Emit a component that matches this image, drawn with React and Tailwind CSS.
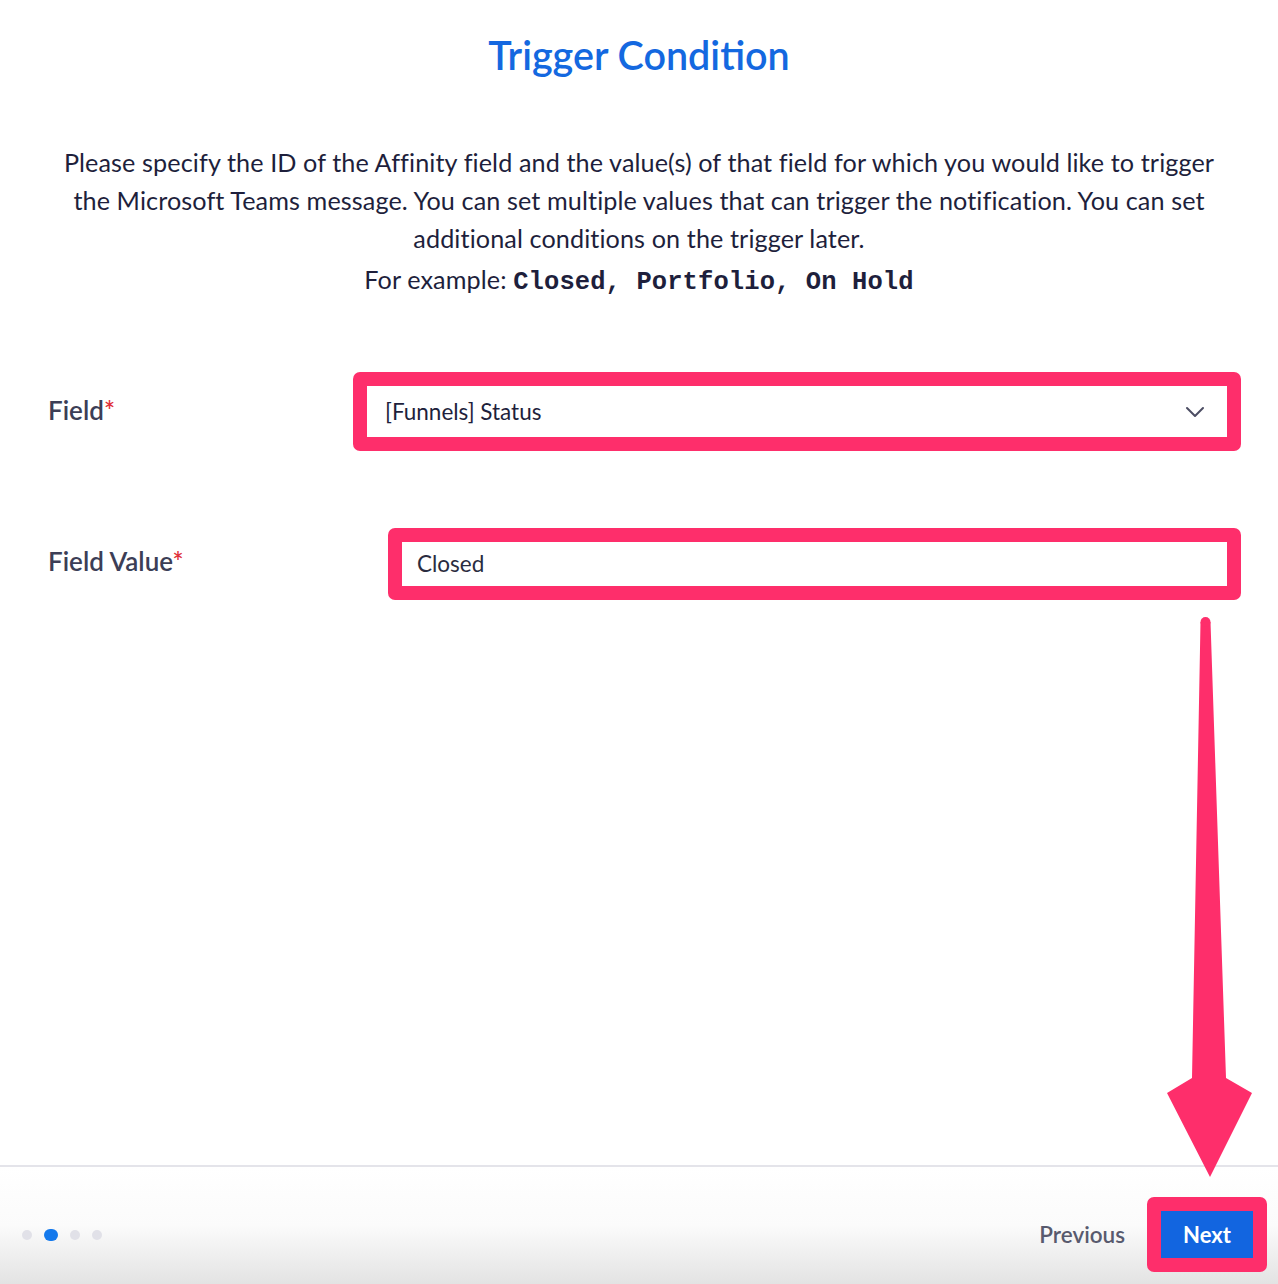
import React from "react";

const font = { fontFamily: '"Lato", "Noto Sans", sans-serif' };

export default function App() {
  return (
    <div className="relative flex h-[1284px] w-[1278px] flex-col overflow-hidden bg-white" style={font}>
      <main className="flex-1">
        <h1 className="pt-[31px] text-center text-[39.5px] font-semibold leading-[48px] text-[#1468e0]">
          Trigger Condition
        </h1>
        <div className="mt-[64px] px-[20px] text-center text-[25.2px] leading-[38px] tracking-[0.1px] text-[#1e1f3c]">
          <p>
            Please specify the ID of the Affinity field and the value(s) of that field for which you would like to trigger
            <br />
            the Microsoft Teams message. You can set multiple values that can trigger the notification. You can set
            <br />
            additional conditions on the trigger later.
          </p>
          <p className="mt-[3px]">
            For example:{" "}
            <span className="text-[25.5px] font-bold" style={{ fontFamily: '"Liberation Mono", monospace' }}>
              Closed, Portfolio, On Hold
            </span>
          </p>
        </div>

        <div className="mt-[70px] flex items-center pl-[48px] pr-[37px]">
          <div className="w-[305px] pb-[2px] text-[26px] font-semibold text-[#3c3e56]">
            Field<span className="text-[#e0303a]">*</span>
          </div>
          <div className="flex-1 rounded-[7px] bg-[#fe2e6b] p-[14px]">
            <div className="flex h-[51px] items-center justify-between bg-white pl-[18px] pr-[22px]">
              <span className="text-[22.5px] text-[#1e1f3c]">[Funnels] Status</span>
              <svg width="20" height="12" viewBox="0 0 20 12" fill="none">
                <path d="M2 2l8 8 8-8" stroke="#4c4d63" strokeWidth="2" strokeLinecap="round" strokeLinejoin="round" />
              </svg>
            </div>
          </div>
        </div>

        <div className="mt-[77px] flex items-center pl-[48px] pr-[37px]">
          <div className="w-[340px] pb-[5px] text-[26px] font-semibold text-[#3c3e56]">
            Field Value<span className="text-[#e0303a]">*</span>
          </div>
          <div className="flex-1 rounded-[7px] bg-[#fe2e6b] p-[14px]">
            <div className="flex h-[44px] items-center bg-white pl-[15px]">
              <span className="text-[22.5px] text-[#2a2c40]">Closed</span>
            </div>
          </div>
        </div>
      </main>

      <footer className="flex h-[119px] items-center justify-between border-t-2 border-[#e4e4ea] bg-gradient-to-b from-white via-[#fbfbfb] to-[#e3e3e3] pl-[22px] pr-[11px] pt-[18px]">
        <div className="flex items-center gap-[12px]">
          <span className="h-[10px] w-[10px] rounded-full bg-[#e1e1e8]"></span>
          <span className="h-[12px] w-[14px] rounded-full bg-[#1479ec]"></span>
          <span className="h-[10px] w-[10px] rounded-full bg-[#e1e1e8]"></span>
          <span className="h-[10px] w-[10px] rounded-full bg-[#e1e1e8]"></span>
        </div>
        <div className="flex items-center gap-[22px]">
          <span className="text-[22.5px] font-semibold text-[#585a6e]">Previous</span>
          <div className="rounded-[7px] bg-[#fe2e6b] p-[14px]">
            <div className="flex h-[47px] w-[92px] items-center justify-center bg-[#1265e0] text-[22px] font-bold text-white">
              Next
            </div>
          </div>
        </div>
      </footer>

      <svg className="pointer-events-none absolute left-0 top-0" width="1278" height="1284">
        <polygon
          points="1200.5,622 1210.5,622 1226,1078 1252,1093 1210,1177 1167,1093 1192,1078"
          fill="#fe2e6b"
          strokeLinejoin="round"
        />
        <circle cx="1205.5" cy="622" r="5" fill="#fe2e6b" />
      </svg>
    </div>
  );
}
